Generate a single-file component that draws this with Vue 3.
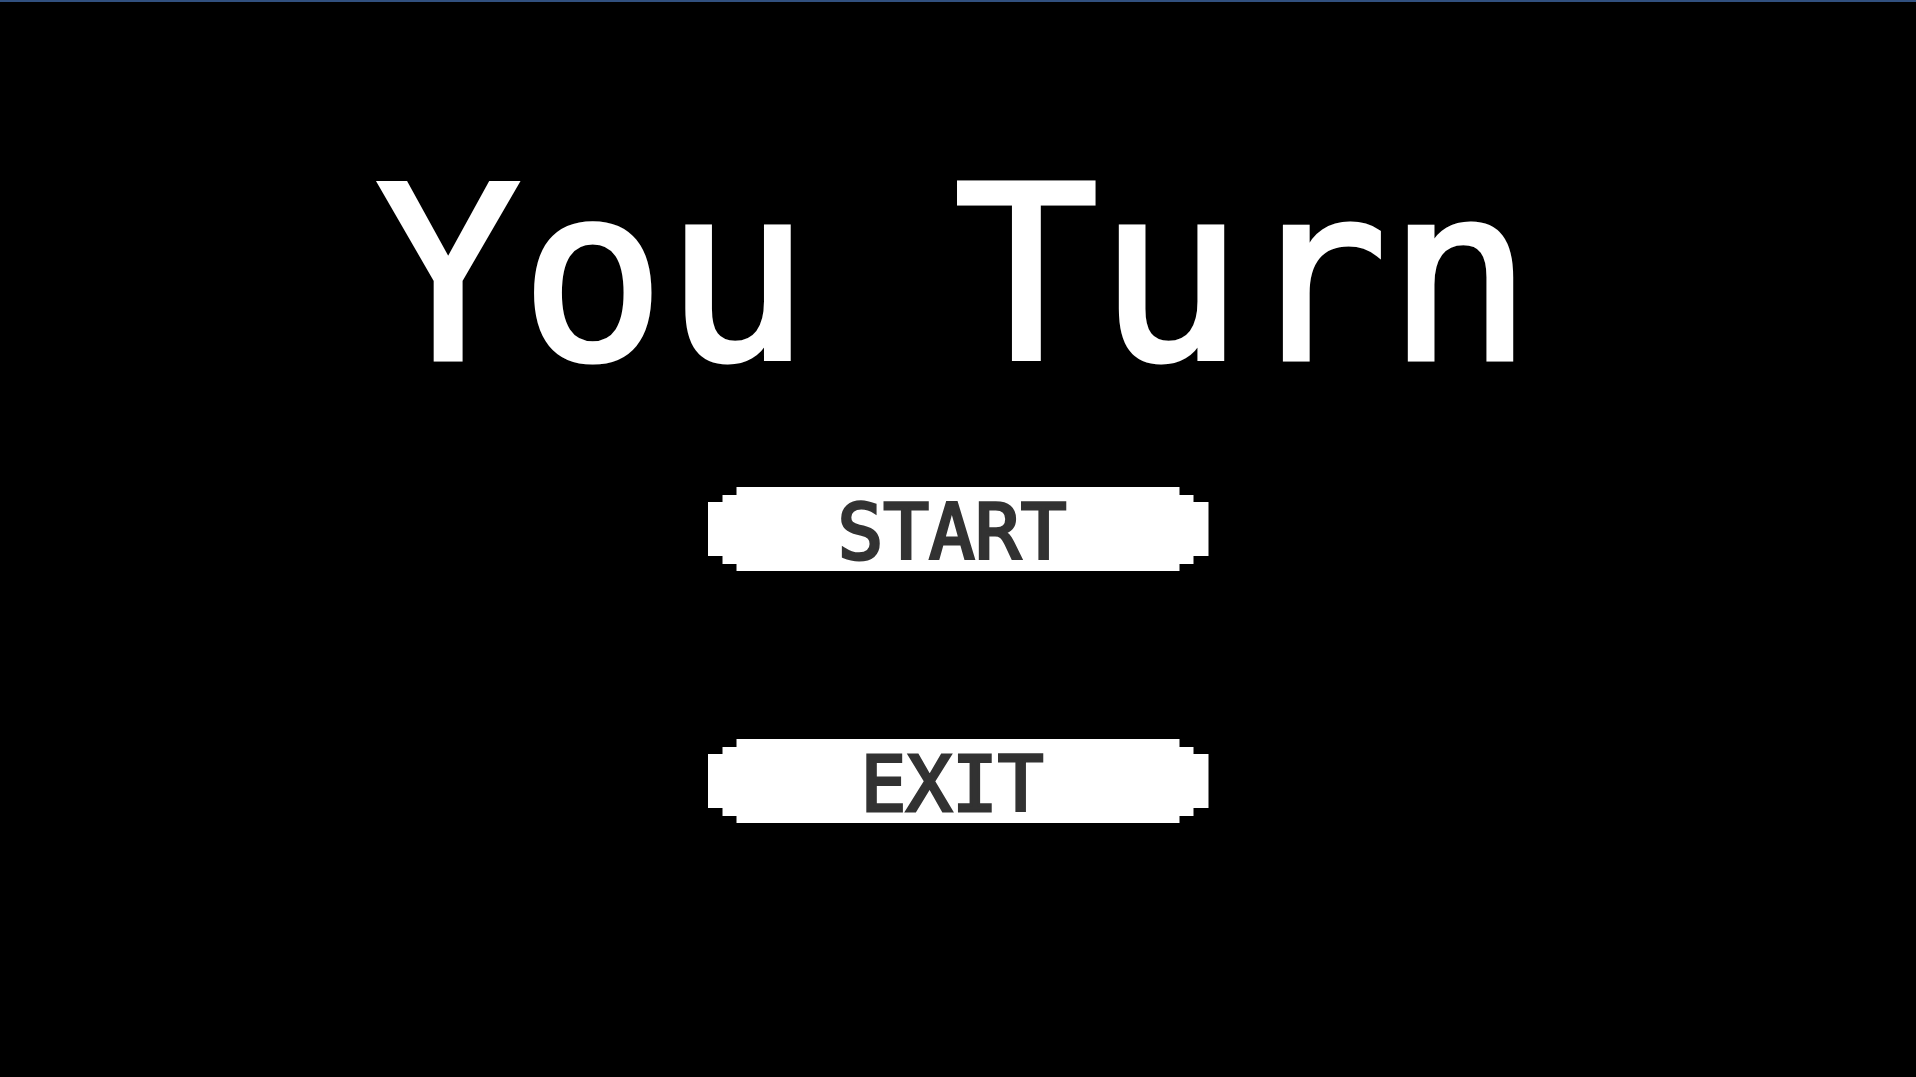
<script setup>
const actions = ['START', 'EXIT']
</script>

<template>
  <main class="screen">
    <h1 class="title">You Turn</h1>
    <nav class="menu" aria-label="Main menu">
      <button v-for="action in actions" :key="action" class="menu-button" type="button">
        {{ action }}
      </button>
    </nav>
  </main>
</template>

<style>
body {
  margin: 0;
  background: #000;
}
</style>

<style scoped>
.screen {
  box-sizing: border-box;
  min-height: 100vh;
  display: flex;
  flex-direction: column;
  align-items: center;
  gap: 121px;
  padding: 184px 0 40px;
  border-top: 2px solid #31507f;
  background: #000;
  font-family: "DejaVu Sans Mono", "Liberation Mono", monospace;
}

.title {
  margin: 0;
  padding-right: 8px;
  color: #fff;
  font-size: 240px;
  font-weight: 400;
  line-height: 180px;
  white-space: nowrap;
  -webkit-text-stroke: 5px #fff;
}

.menu {
  display: flex;
  flex-direction: column;
  align-items: center;
  gap: 168px;
  width: 100%;
}

.menu-button {
  box-sizing: border-box;
  width: 501px;
  max-width: 100%;
  height: 84px;
  padding: 8px 12px 0 0;
  border: 0;
  background: #fff;
  color: #323232;
  font-family: inherit;
  font-size: 76px;
  font-weight: 400;
  line-height: 76px;
  text-align: center;
  cursor: pointer;
  -webkit-text-stroke: 3px #323232;
  /* Stepped corners */
  clip-path: polygon(
    0 15px, 15px 15px, 15px 8px, 29px 8px, 29px 0,
    calc(100% - 29px) 0, calc(100% - 29px) 8px, calc(100% - 15px) 8px, calc(100% - 15px) 15px, 100% 15px,
    100% calc(100% - 15px), calc(100% - 15px) calc(100% - 15px), calc(100% - 15px) calc(100% - 7px), calc(100% - 29px) calc(100% - 7px), calc(100% - 29px) 100%,
    29px 100%, 29px calc(100% - 7px), 15px calc(100% - 7px), 15px calc(100% - 15px), 0 calc(100% - 15px)
  );
}
</style>
